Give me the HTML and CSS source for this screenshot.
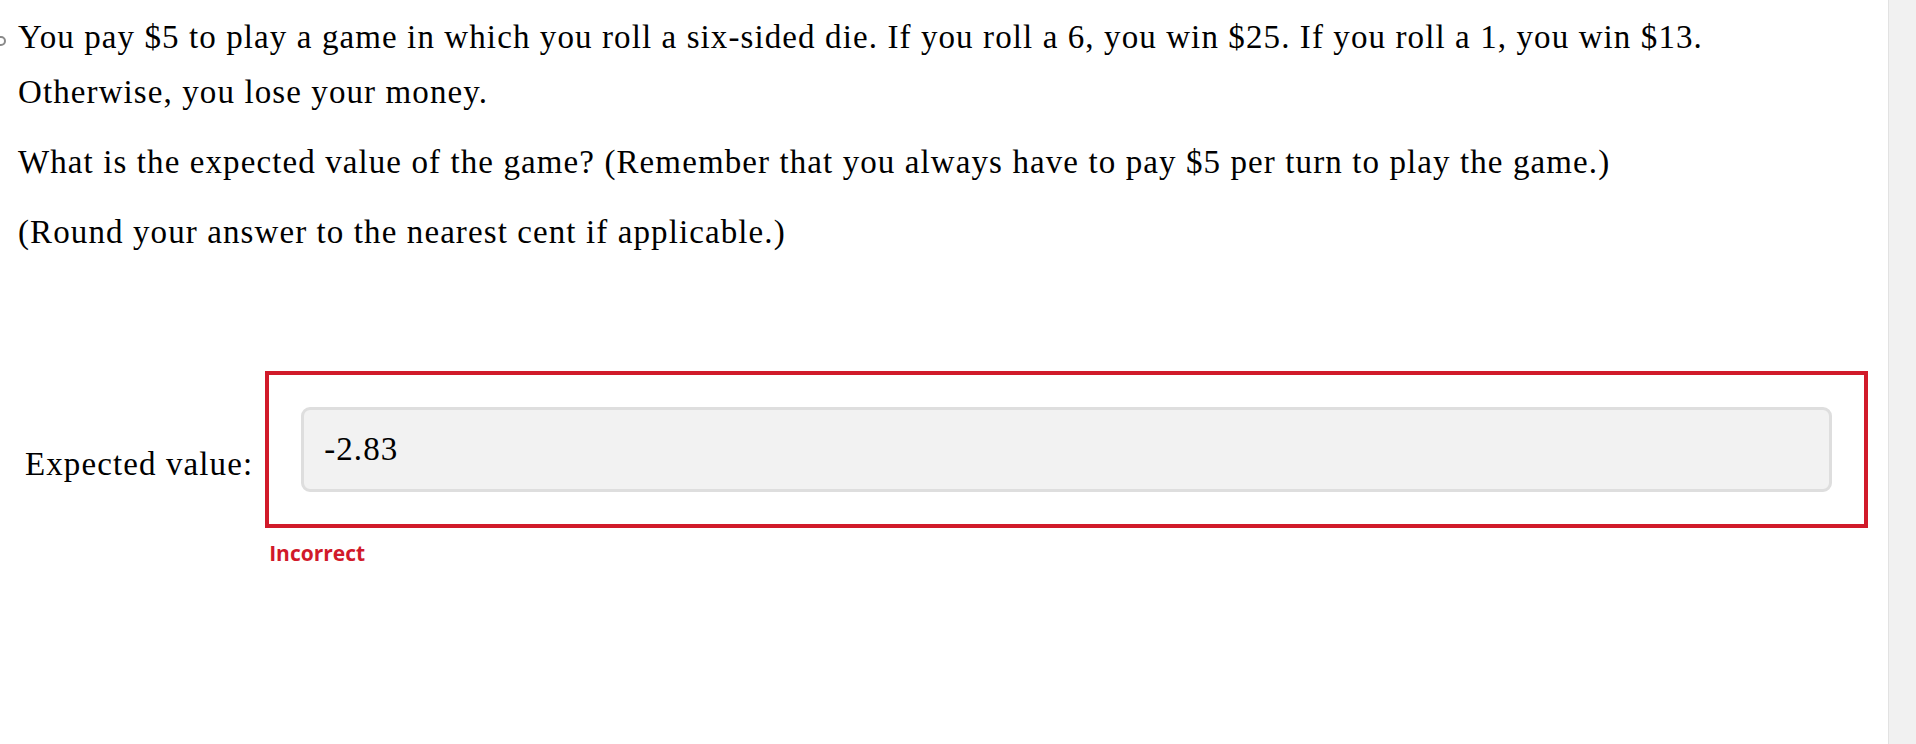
FILE: index.html
```html
<!DOCTYPE html>
<html lang="en">
  <head>
    <meta http-equiv="Content-Type" content="text/html; charset=utf-8" />
    <title>Expected value question</title>
    <link rel="stylesheet" href="styles.css">
  </head>
  <body>
    <div class="page">
      <main class="question">
        <div class="question-text">
          <p>
            <span class="marker"></span>You pay $5 to play a game in which you roll a six-sided die. If you roll a 6, you win $25. If you roll a 1, you win $13. Otherwise, you lose your money.
          </p>
          <p>
            What is the expected value of the game? (Remember that you always have to pay $5 per turn to play the game.)
          </p>
          <p>(Round your answer to the nearest cent if applicable.)</p>
        </div>
        <div class="answer">
          <label class="answer-label" for="answer-0">Expected value:</label>
          <div class="answer-field">
            <div class="answer-box answer-incorrect">
              <input
                type="text"
                id="answer-0"
                class="answer-input"
                value="-2.83"
              />
            </div>
            <div class="feedback">Incorrect</div>
          </div>
        </div>
      </main>
      <div class="scrollbar"></div>
    </div>
  </body>
</html>
```

FILE: styles.css
```css
html,
body {
  height: 100%;
}
body {
  margin: 0;
  padding: 0;
  background-color: white;
  color: black;
  font-family: "Liberation Serif", "Times New Roman", serif;
  font-size: 33px;
  letter-spacing: 1.1px;
}
.page {
  display: flex;
  height: 100%;
}
.question {
  flex: 1;
  padding: 10px 20px 0 0;
  min-width: 0;
}
.question-text p {
  margin: 0 40px 15px 18px;
  line-height: 55px;
}
.marker {
  display: inline-block;
  box-sizing: border-box;
  width: 10px;
  height: 10px;
  border: 2px solid #8a8a8a;
  border-radius: 50%;
  margin-left: -22px;
  margin-right: 12px;
  vertical-align: 2px;
}
.answer {
  display: flex;
  align-items: flex-start;
  gap: 12px;
  margin-top: 111px;
  padding-left: 25px;
}
.answer-label {
  line-height: 55px;
  margin-top: 66px;
  white-space: nowrap;
}
.answer-field {
  flex: 1;
}
.answer-box {
  border: 4px solid #d11a2a;
  padding: 32px;
}
.answer-input {
  display: block;
  box-sizing: border-box;
  width: 100%;
  height: 85px;
  margin: 0;
  padding: 0 20px;
  border: 3px solid #dedede;
  border-radius: 9px;
  background-color: #f2f2f2;
  font-family: "Liberation Serif", "Times New Roman", serif;
  font-size: 33px;
  letter-spacing: 1.1px;
  color: black;
  outline: none;
}
.feedback {
  margin-top: 11px;
  padding-left: 4px;
  font-family: "Open Sans", "Liberation Sans", sans-serif;
  font-weight: 700;
  font-size: 21px;
  line-height: 28px;
  letter-spacing: 0;
  color: #d11a2a;
}
.scrollbar {
  width: 27px;
  flex-shrink: 0;
  background-color: #f1f1f1;
  border-left: 1px solid #e2e2e2;
}
```
